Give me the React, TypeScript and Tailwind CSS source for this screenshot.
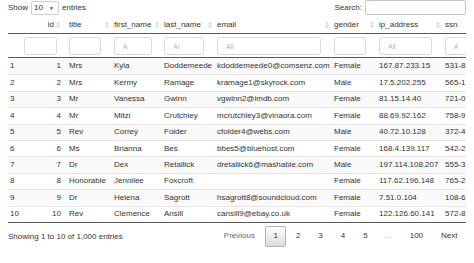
import React from "react";

type Col = { key: string; w: number; input?: number; ph?: string; right?: boolean };

const cols: Col[] = [
  { key: "id", w: 45, input: 33, ph: "", right: true },
  { key: "title", w: 45, input: 32, ph: "" },
  { key: "first_name", w: 50, input: 38, ph: "A" },
  { key: "last_name", w: 53, input: 40, ph: "Al" },
  { key: "email", w: 117, input: 104, ph: "All" },
  { key: "gender", w: 45, input: 32, ph: "" },
  { key: "ip_address", w: 66, input: 53, ph: "All" },
  { key: "ssn", w: 90, input: 53, ph: "A" },
];

const rows: string[][] = [
  ["1", "Mrs", "Kyla", "Doddemeede", "kdoddemeede0@comsenz.com", "Female", "167.87.233.15", "531-8"],
  ["2", "Mrs", "Kermy", "Ramage", "kramage1@skyrock.com", "Male", "17.5.202.255", "565-1"],
  ["3", "Mr", "Vanessa", "Gwinn", "vgwinn2@imdb.com", "Female", "81.15.14.40", "721-0"],
  ["4", "Mr", "Mitzi", "Crutchley", "mcrutchley3@vinaora.com", "Female", "88.69.92.162", "758-9"],
  ["5", "Rev", "Correy", "Folder", "cfolder4@webs.com", "Male", "40.72.10.128", "372-4"],
  ["6", "Ms", "Brianna", "Bes", "bbes5@bluehost.com", "Female", "168.4.139.117", "542-2"],
  ["7", "Dr", "Dex", "Retallick", "dretallick6@mashable.com", "Male", "197.114.108.207", "555-3"],
  ["8", "Honorable", "Jennilee", "Foxcroft", "", "Female", "117.62.196.148", "765-2"],
  ["9", "Dr", "Helena", "Sagrott", "hsagrott8@soundcloud.com", "Female", "7.51.0.104", "108-6"],
  ["10", "Rev", "Clemence", "Ansill", "cansill9@ebay.co.uk", "Female", "122.126.60.141", "572-8"],
];

function SortIcon() {
  return (
    <svg width="4" height="8" viewBox="0 0 4 8" className="block">
      <polygon points="0,3.4 2,0.6 4,3.4" fill="#d6d6d6" />
      <polygon points="0,4.6 4,4.6 2,7.4" fill="#d6d6d6" />
    </svg>
  );
}

export default function App() {
  return (
    <div className="w-[474px] h-[263px] bg-white px-[8px] text-[8px] leading-none text-[#333] font-['Liberation_Sans',Arial,sans-serif] overflow-hidden">
      {/* top controls */}
      <div className="flex h-[16px] items-start justify-between">
        <div className="flex items-center h-[15px] gap-[3px]">
          <span>Show</span>
          <div className="flex h-[14px] w-[28px] items-center justify-between rounded-[2px] border border-[#cfcfcf] bg-white pl-[2px] pr-[4px] mt-[1px]">
            <span>10</span>
            <span className="text-[5px] text-[#444]">▼</span>
          </div>
          <span>entries</span>
        </div>
        <div className="flex items-center gap-[3px] h-[15px]">
          <span>Search:</span>
          <div className="h-[15px] w-[101px] rounded-[2px] border border-[#c4c4c4] bg-white" />
        </div>
      </div>

      {/* table */}
      <div className="w-[458px] overflow-hidden">
        <div className="w-[521px]">
          {/* header */}
          <div className="flex h-[18px] items-center border-b border-[#5a5a5a]">
            <div className="w-[10px] shrink-0" />
            {cols.map((c) => (
              <div
                key={c.key}
                className={
                  "relative flex h-full shrink-0 items-center pl-[6px] " +
                  (c.right ? "justify-end pr-[9px]" : "pr-[4px]")
                }
                style={{ width: c.w }}
              >
                <span className="whitespace-nowrap">{c.key}</span>
                {c.key !== "ssn" ? (
                  <span className={"absolute top-[5px] " + (c.right ? "right-[3px]" : "right-[-1px]")}>
                    <SortIcon />
                  </span>
                ) : null}
              </div>
            ))}
          </div>
          {/* filter row */}
          <div className="flex h-[24px] items-start border-b border-[#5a5a5a] pt-[3px]">
            <div className="w-[10px] shrink-0" />
            {cols.map((c) => (
              <div key={c.key} className="shrink-0 pl-[6px]" style={{ width: c.w }}>
                <div
                  className="flex h-[18px] items-center rounded-[3px] border border-[#d9d9d9] bg-white pl-[8px] text-[7px] text-[#b5b5b5]"
                  style={{ width: c.input }}
                >
                  {c.ph}
                </div>
              </div>
            ))}
          </div>
          {/* body */}
          <div className="border-b border-[#5a5a5a]">
            {rows.map((r, i) => (
              <div
                key={i}
                className={
                  "flex h-[16.4px] items-center " +
                  (i > 0 ? "border-t border-[#e6e6e6] " : "") +
                  (i % 2 === 0 ? "bg-[#f9f9f9]" : "bg-white")
                }
              >
                <div className="w-[10px] shrink-0 pl-[2px] whitespace-nowrap">{i + 1}</div>
                {cols.map((c, j) => (
                  <div
                    key={c.key}
                    className={
                      "shrink-0 whitespace-nowrap " +
                      (c.right ? "text-right pr-[2px]" : "pl-[6px]")
                    }
                    style={{ width: c.w }}
                  >
                    {r[j]}
                  </div>
                ))}
              </div>
            ))}
          </div>
        </div>
      </div>

      {/* footer */}
      <div className="mt-[3px] flex h-[21px] items-center justify-between">
        <span className="pt-[1px]">Showing 1 to 10 of 1,000 entries</span>
        <div className="flex items-center gap-[1px]">
          <span className="border border-transparent px-[8px] py-[5px] text-[#666]">Previous</span>
          <span className="rounded-[2px] border border-[#b4b4b4] bg-gradient-to-b from-white to-[#dcdcdc] px-[7.5px] py-[5.5px]">1</span>
          <span className="border border-transparent px-[7.5px] py-[5px]">2</span>
          <span className="border border-transparent px-[7.5px] py-[5px]">3</span>
          <span className="border border-transparent px-[7.5px] py-[5px]">4</span>
          <span className="border border-transparent px-[7.5px] py-[5px]">5</span>
          <span className="px-[7.5px] py-[5px] text-[#888]">…</span>
          <span className="border border-transparent px-[7.5px] py-[5px]">100</span>
          <span className="border border-transparent px-[7.5px] py-[5px]">Next</span>
        </div>
      </div>
    </div>
  );
}
